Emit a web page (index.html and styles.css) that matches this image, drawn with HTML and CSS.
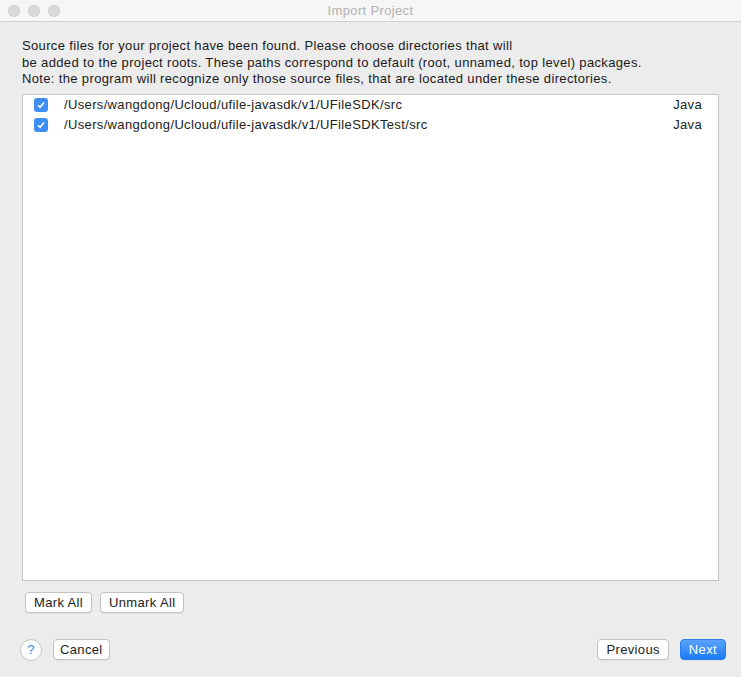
FILE: index.html
```html
<!DOCTYPE html>
<html lang="en">
<head>
    <meta charset="UTF-8">
    <title>Import Project</title>
    <link rel="stylesheet" href="styles.css">
</head>
<body>
    <div class="window">
        <div class="titlebar">
            <div class="lights">
                <span class="light"></span>
                <span class="light"></span>
                <span class="light"></span>
            </div>
            <span class="title">Import Project</span>
        </div>

        <div class="content">
            <p class="intro">Source files for your project have been found. Please choose directories that will<br>
            be added to the project roots. These paths correspond to default (root, unnamed, top level) packages.<br>
            Note: the program will recognize only those source files, that are located under these directories.</p>

            <div class="list">
                <div class="row">
                    <span class="check"><svg width="10" height="10" viewBox="0 0 10 10"><path d="M2 5.2 L4.1 7.3 L8 2.6" fill="none" stroke="#fff" stroke-width="1.5"/></svg></span>
                    <span class="path">/Users/wangdong/Ucloud/ufile-javasdk/v1/UFileSDK/src</span>
                    <span class="lang">Java</span>
                </div>
                <div class="row">
                    <span class="check"><svg width="10" height="10" viewBox="0 0 10 10"><path d="M2 5.2 L4.1 7.3 L8 2.6" fill="none" stroke="#fff" stroke-width="1.5"/></svg></span>
                    <span class="path">/Users/wangdong/Ucloud/ufile-javasdk/v1/UFileSDKTest/src</span>
                    <span class="lang">Java</span>
                </div>
            </div>

            <div class="list-buttons">
                <button class="btn">Mark All</button>
                <button class="btn">Unmark All</button>
            </div>
        </div>

        <footer>
            <div class="left">
                <span class="help">?</span>
                <button class="btn">Cancel</button>
            </div>
            <div class="right">
                <button class="btn">Previous</button>
                <button class="btn primary">Next</button>
            </div>
        </footer>
    </div>
</body>
</html>
```

FILE: styles.css
```css
body {
    margin: 0;
    font-family: "Liberation Sans", Arial, sans-serif;
    font-size: 13px;
    letter-spacing: 0.35px;
    color: #222;
    background: #ececec;
}

.window {
    width: 741px;
    height: 677px;
    display: flex;
    flex-direction: column;
    overflow: hidden;
}

.titlebar {
    height: 21px;
    flex-shrink: 0;
    background: #f6f6f6;
    border-bottom: 1px solid #d2d2d2;
    display: flex;
    align-items: center;
    justify-content: center;
    position: relative;
}

.lights {
    position: absolute;
    left: 8px;
    top: 5px;
    display: flex;
    gap: 8px;
}

.light {
    width: 12px;
    height: 12px;
    border-radius: 50%;
    background: #d9d9d9;
    box-shadow: inset 0 0 0 1px #cfcfcf;
}

.title {
    color: #b3b3b3;
    font-size: 13px;
}

.content {
    flex-grow: 1;
    padding: 16px 22px 0 22px;
    display: flex;
    flex-direction: column;
}

.intro {
    margin: 0;
    line-height: 16.5px;
    color: #1a1a1a;
}

.list {
    margin-top: 6px;
    width: 697px;
    height: 487px;
    background: #fff;
    border: 1px solid #c4c4c4;
    box-sizing: border-box;
}

.row {
    height: 20px;
    display: flex;
    align-items: center;
    padding: 0 16px 0 11px;
}

.check {
    width: 14px;
    height: 14px;
    border-radius: 3px;
    background: #3d8ff5;
    display: flex;
    align-items: center;
    justify-content: center;
    margin-right: 16px;
}

.path {
    flex-grow: 1;
}

.list-buttons {
    margin-top: 11px;
    margin-left: 3px;
    display: flex;
    gap: 8px;
}

.btn {
    font-family: "Liberation Sans", Arial, sans-serif;
    font-size: 13px;
    letter-spacing: 0.35px;
    color: #222;
    background: #fff;
    border: 1px solid #c2c2c2;
    border-radius: 4px;
    height: 21px;
    padding: 0 8px;
    box-shadow: 0 1px 0 rgba(0, 0, 0, 0.05);
}

.btn.primary {
    background: linear-gradient(#5aa2fb, #1a7cf6);
    border-color: #2a7de6;
    color: #fff;
}

footer {
    height: 72px;
    flex-shrink: 0;
    display: flex;
    justify-content: space-between;
    align-items: flex-start;
    padding: 26px 15px 0 20px;
    box-sizing: border-box;
}

.left, .right {
    display: flex;
    align-items: center;
    gap: 11px;
}

.left .btn {
    padding: 0 6px;
}

.help {
    width: 20px;
    height: 20px;
    border-radius: 50%;
    background: #fff;
    border: 1px solid #c6c6c6;
    color: #2f86f5;
    font-size: 13px;
    display: flex;
    align-items: center;
    justify-content: center;
}
```
